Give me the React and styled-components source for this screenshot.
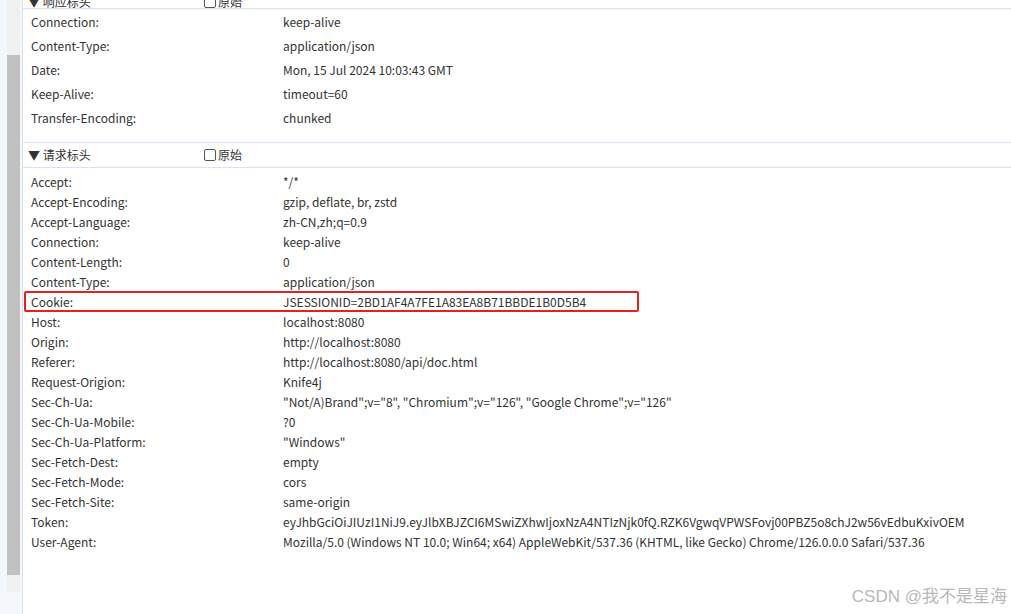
import styled, { createGlobalStyle } from "styled-components";

const Global = createGlobalStyle`
  body { margin: 0; background: #fff; font-family: "Noto Sans CJK SC", "Noto Sans", sans-serif; }
`;

const Page = styled.div`
  display: flex;
  width: 1011px;
  height: 614px;
  overflow: hidden;
  position: relative;
`;

const LeftStrip = styled.div`
  width: 22px;
  flex-shrink: 0;
  background: #f4f7fb;
  position: relative;
  border-right: 1px solid #d5e3f4;
`;

const Scroll = styled.div`
  position: absolute;
  left: 7px;
  width: 13px;
  top: ${(p) => p.top}px;
  height: ${(p) => p.h}px;
  background: ${(p) => p.bg};
`;

const Panel = styled.div`
  flex: 1;
  display: flex;
  flex-direction: column;
  font-size: 12px;
  color: #333;
`;

const SectionHead = styled.div`
  display: flex;
  align-items: ${(p) => (p.noTop ? "flex-end" : "center")};
  height: ${(p) => p.h}px;
  padding-left: 5px;
  border-top: ${(p) => (p.noTop ? "none" : "1px solid #d5e3f4")};
  border-bottom: 1px solid #d5e3f4;
  margin-top: ${(p) => p.mt || 0}px;
  flex-shrink: 0;
  overflow: hidden;
  line-height: 12px;
`;

const HeadTitle = styled.span`
  width: 176px;
`;

const Raw = styled.label`
  display: flex;
  align-items: center;
  gap: 2px;
`;

const Box = styled.span`
  width: 10px;
  height: 10px;
  border: 1px solid #555;
  border-radius: 2px;
`;

const Row = styled.div`
  display: flex;
  align-items: center;
  height: ${(p) => p.h}px;
  padding-left: 8px;
  position: relative;
  white-space: nowrap;
  flex-shrink: 0;
`;

const Key = styled.span`
  width: 252px;
  flex-shrink: 0;
`;

const Highlight = styled.div`
  position: absolute;
  left: 1px;
  top: 0;
  width: 611px;
  height: 17px;
  border: 2px solid #e62020;
  border-radius: 2px;
`;

const Mark = styled.div`
  position: absolute;
  right: 4px;
  bottom: 7px;
  font-size: 17px;
  color: #b8b8b8;
  font-family: "Liberation Sans", "Noto Sans CJK SC", sans-serif;
`;

const resp = [
  ["Connection:", "keep-alive"],
  ["Content-Type:", "application/json"],
  ["Date:", "Mon, 15 Jul 2024 10:03:43 GMT"],
  ["Keep-Alive:", "timeout=60"],
  ["Transfer-Encoding:", "chunked"],
];

const req = [
  ["Accept:", "*/*"],
  ["Accept-Encoding:", "gzip, deflate, br, zstd"],
  ["Accept-Language:", "zh-CN,zh;q=0.9"],
  ["Connection:", "keep-alive"],
  ["Content-Length:", "0"],
  ["Content-Type:", "application/json"],
  ["Cookie:", "JSESSIONID=2BD1AF4A7FE1A83EA8B71BBDE1B0D5B4"],
  ["Host:", "localhost:8080"],
  ["Origin:", "http://localhost:8080"],
  ["Referer:", "http://localhost:8080/api/doc.html"],
  ["Request-Origion:", "Knife4j"],
  ["Sec-Ch-Ua:", '"Not/A)Brand";v="8", "Chromium";v="126", "Google Chrome";v="126"'],
  ["Sec-Ch-Ua-Mobile:", "?0"],
  ["Sec-Ch-Ua-Platform:", '"Windows"'],
  ["Sec-Fetch-Dest:", "empty"],
  ["Sec-Fetch-Mode:", "cors"],
  ["Sec-Fetch-Site:", "same-origin"],
  ["Token:", "eyJhbGciOiJIUzI1NiJ9.eyJlbXBJZCI6MSwiZXhwIjoxNzA4NTIzNjk0fQ.RZK6VgwqVPWSFovj00PBZ5o8chJ2w56vEdbuKxivOEM"],
  ["User-Agent:", "Mozilla/5.0 (Windows NT 10.0; Win64; x64) AppleWebKit/537.36 (KHTML, like Gecko) Chrome/126.0.0.0 Safari/537.36"],
];

export default function App() {
  return (
    <Page>
      <Global />
      <LeftStrip>
        <Scroll top={0} h={55} bg="#f0f0f0" />
        <Scroll top={55} h={520} bg="#c1c1c1" />
        <Scroll top={575} h={17} bg="#f0f0f0" />
      </LeftStrip>
      <Panel>
        <SectionHead h={8} noTop>
          <HeadTitle>▼ 响应标头</HeadTitle>
          <Raw>
            <Box />
            原始
          </Raw>
        </SectionHead>
        {resp.map(([k, v]) => (
          <Row h={24} key={k}>
            <Key>{k}</Key>
            {v}
          </Row>
        ))}
        <SectionHead h={24} mt={13}>
          <HeadTitle>▼ 请求标头</HeadTitle>
          <Raw>
            <Box />
            原始
          </Raw>
        </SectionHead>
        <Row h={3} />
        {req.map(([k, v]) => (
          <Row h={20} key={k}>
            {k === "Cookie:" && <Highlight />}
            <Key>{k}</Key>
            {v}
          </Row>
        ))}
      </Panel>
      <Mark>CSDN @我不是星海</Mark>
    </Page>
  );
}
